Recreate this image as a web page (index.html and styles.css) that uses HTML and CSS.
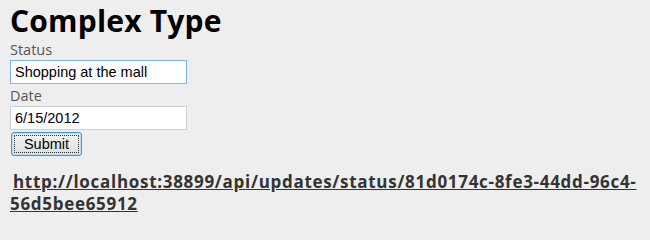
FILE: index.html
```html
<!DOCTYPE html>
<html>
<head>
<meta charset="utf-8">
<link rel="stylesheet" href="styles.css">
</head>
<body>
<div class="page">
  <h1 class="title">Complex Type</h1>
  <form class="form">
    <label class="label" for="status">Status</label>
    <input class="field field-focus" id="status" type="text" value="Shopping at the mall">
    <label class="label" for="date">Date</label>
    <input class="field" id="date" type="text" value="6/15/2012">
    <div class="actions"><button class="submit" type="button">Submit</button></div>
  </form>
  <p class="result"><a class="link" href="#">http://localhost:38899/api/updates/status/81d0174c-8fe3-44dd-96c4-56d5bee65912</a></p>
</div>
</body>
</html>
```
FILE: styles.css
```css
html, body {
  margin: 0;
  padding: 0;
  background: #eeeeee;
}
.page {
  padding: 0 10px;
  font-family: "Open Sans", "Noto Sans", sans-serif;
  color: #000;
}
.title {
  margin: 0 0 -3px;
  font-size: 30px;
  font-weight: 700;
  line-height: 41px;
  letter-spacing: 0.2px;
}
.form {
  display: flex;
  flex-direction: column;
  align-items: flex-start;
}
.label {
  font-size: 14.5px;
  color: #555;
  line-height: 24px;
  height: 22px;
}
.field {
  box-sizing: border-box;
  width: 177px;
  height: 24px;
  margin: 0;
  padding: 1px 4px;
  border: 1px solid #c8d0d8;
  background: #fff;
  font-family: "Liberation Sans", Arial, sans-serif;
  font-size: 14.5px;
  color: #000;
}
.field-focus {
  border-color: #7eb4ea;
}
.actions {
  margin-top: 2px;
  padding-left: 1px;
}
.submit {
  box-sizing: border-box;
  width: 71px;
  height: 24px;
  margin: 0;
  padding: 0;
  border: 1px solid #3c9ad6;
  border-radius: 3px;
  background: linear-gradient(#f4f4f4, #dedede);
  box-shadow: inset 0 0 0 1px #b4def6;
  font-family: "Liberation Sans", Arial, sans-serif;
  font-size: 14.5px;
  color: #000;
  outline: 1px dotted #333;
  outline-offset: -4px;
}
.result {
  margin: 15px 0 0;
  font-size: 17px;
  font-weight: 700;
  line-height: 22px;
  letter-spacing: 0.7px;
  text-indent: 3px;
}
.link {
  color: #333;
  text-decoration: underline;
}
```
